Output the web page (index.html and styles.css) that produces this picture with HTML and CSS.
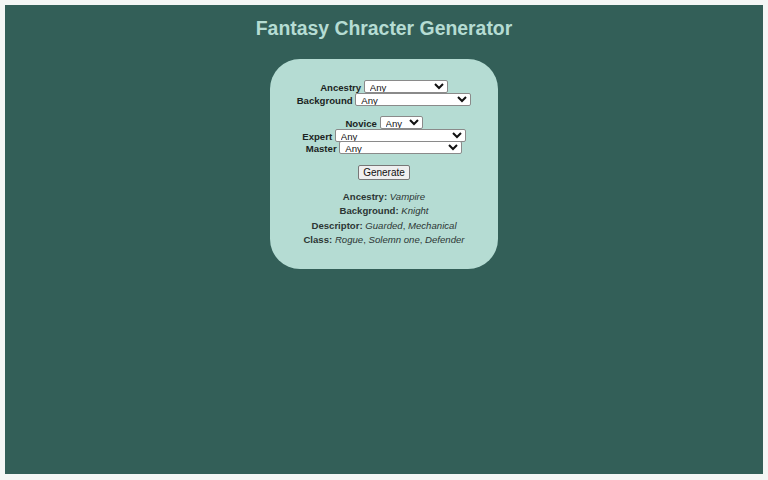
FILE: index.html
```html
<!DOCTYPE html>
<html lang="en">
  <head>
    <meta charset="UTF-8" />
    <meta name="viewport" content="width=device-width, initial-scale=1.0" />
    <title>Fantasy Chracter Generator</title>
    <link rel="stylesheet" href="styles.css">
  </head>
  <body>
    <div class="page">
      <h1>Fantasy Chracter Generator</h1>

      <div class="card">
        <div class="group">
          <div class="row">
            <label for="ancestry">Ancestry</label>
            <select id="ancestry" class="w-ancestry"><option>Any</option></select>
          </div>
          <div class="row">
            <label for="background">Background</label>
            <select id="background" class="w-background"><option>Any</option></select>
          </div>
        </div>

        <div class="group group-classes">
          <div class="row">
            <label for="novice">Novice</label>
            <select id="novice" class="w-novice"><option>Any</option></select>
          </div>
          <div class="row">
            <label for="expert">Expert</label>
            <select id="expert" class="w-expert"><option>Any</option></select>
          </div>
          <div class="row">
            <label for="master">Master</label>
            <select id="master" class="w-master"><option>Any</option></select>
          </div>
        </div>

        <button id="generate-btn">Generate</button>

        <div class="result">
          <p><b>Ancestry:</b> <i>Vampire</i></p>
          <p><b>Background:</b> <i>Knight</i></p>
          <p><b>Descriptor:</b> <i>Guarded</i>, <i>Mechanical</i></p>
          <p><b>Class:</b> <i>Rogue</i>, <i>Solemn one</i>, <i>Defender</i></p>
        </div>
      </div>
    </div>
  </body>
</html>
```

FILE: styles.css
```css
:root {
  --dark-green: #335f58;
  --light-green: #b5dcd3;
  --page-bg: #f4f6f5;
  --text-color: #1b2422;
  --result-color: #2c3634;
}

html {
  background: var(--page-bg);
}

body {
  margin: 5px 5px 0 5px;
  font-family: "Liberation Sans", Arial, sans-serif;
  color: var(--text-color);
}

.page {
  background-color: var(--dark-green);
  height: 469px;
  padding-top: 17px;
  box-sizing: border-box;
}

h1 {
  color: var(--light-green);
  text-align: center;
  font-size: 19.4px;
  margin: 0 0 24px 0;
  line-height: 13px;
}

.card {
  background-color: var(--light-green);
  width: 228px;
  margin: 0 auto;
  border-radius: 30px;
  padding: 21px 0 21px 0;
  box-sizing: border-box;
  text-align: center;
}

.group {
  margin-bottom: 11px;
}

.group-classes {
  margin-bottom: 8px;
}

.row {
  font-size: 9.6px;
  line-height: 12.6px;
  height: 12.6px;
}

label {
  font-weight: bold;
}

select {
  font-family: "Liberation Sans", Arial, sans-serif;
  font-size: 9.6px;
  height: 13px;
  padding: 0 0 0 1px;
  background: #fff;
  border: 1px solid #8a8a8a;
  border-radius: 2px;
  color: #111;
}

.w-ancestry { width: 84px; }
.w-background { width: 116px; }
.w-novice { width: 43px; }
.w-expert { width: 131px; }
.w-master { width: 123px; }

button {
  font-family: "Liberation Sans", Arial, sans-serif;
  font-size: 10px;
  padding: 1px 4px;
  margin-top: 0;
  background: #efefef;
  border: 1px solid #777;
  border-radius: 2px;
  color: #111;
}

.result {
  margin-top: 10px;
  font-size: 9.6px;
  color: var(--result-color);
}

.result p {
  margin: 0;
  line-height: 14.5px;
}
```
